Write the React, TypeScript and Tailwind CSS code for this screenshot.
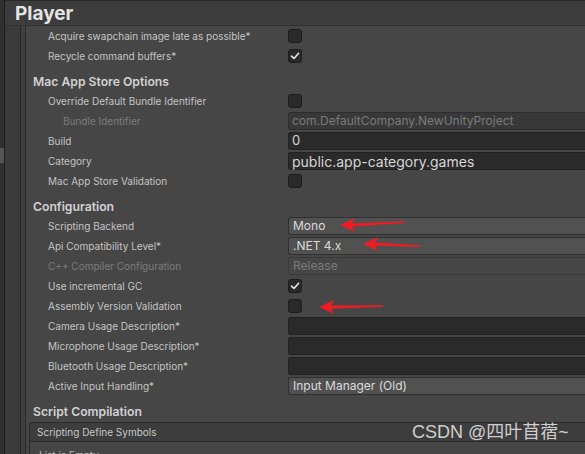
import React from 'react';

type Row =
  | { kind: 'header'; label: string }
  | { kind: 'check'; label: string; checked?: boolean; dim?: boolean; indent?: boolean }
  | { kind: 'text'; label: string; value?: string; dim?: boolean; indent?: boolean; size?: string }
  | { kind: 'select'; label: string; value: string; dim?: boolean };

const rows: Row[] = [
  { kind: 'check', label: 'Acquire swapchain image late as possible*' },
  { kind: 'check', label: 'Recycle command buffers*', checked: true },
  { kind: 'header', label: 'Mac App Store Options' },
  { kind: 'check', label: 'Override Default Bundle Identifier' },
  { kind: 'text', label: 'Bundle Identifier', value: 'com.DefaultCompany.NewUnityProject', dim: true, indent: true, size: 'text-[12px]' },
  { kind: 'text', label: 'Build', value: '0', size: 'text-[13px]' },
  { kind: 'text', label: 'Category', value: 'public.app-category.games', size: 'text-[14px]' },
  { kind: 'check', label: 'Mac App Store Validation' },
  { kind: 'header', label: 'Configuration' },
  { kind: 'select', label: 'Scripting Backend', value: 'Mono' },
  { kind: 'select', label: 'Api Compatibility Level*', value: '.NET 4.x' },
  { kind: 'select', label: 'C++ Compiler Configuration', value: 'Release', dim: true },
  { kind: 'check', label: 'Use incremental GC', checked: true },
  { kind: 'check', label: 'Assembly Version Validation' },
  { kind: 'text', label: 'Camera Usage Description*' },
  { kind: 'text', label: 'Microphone Usage Description*' },
  { kind: 'text', label: 'Bluetooth Usage Description*' },
  { kind: 'select', label: 'Active Input Handling*', value: 'Input Manager (Old)' },
  { kind: 'header', label: 'Script Compilation' },
];

const Checkbox = ({ checked }: { checked?: boolean }) => (
  <div className="w-[14px] h-[14px] rounded-[3px] bg-[#2a2a2a] border border-[#1c1c1c] flex items-center justify-center">
    {checked && (
      <svg width="10" height="10" viewBox="0 0 10 10">
        <path d="M1.5 5.2 L4 7.5 L8.6 2.3" fill="none" stroke="#e8e8e8" strokeWidth="1.6" strokeLinecap="round" strokeLinejoin="round" />
      </svg>
    )}
  </div>
);

const Arrow = ({ x1, y1, x2, y2 }: { x1: number; y1: number; x2: number; y2: number }) => {
  // tip at (x1,y1), tail at (x2,y2)
  const left = Math.min(x1, x2) - 2;
  const top = Math.min(y1, y2) - 10;
  const w = Math.abs(x2 - x1) + 4;
  const h = Math.abs(y2 - y1) + 20;
  const tx = x1 - left;
  const ty = y1 - top;
  const ex = x2 - left;
  const ey = y2 - top;
  return (
    <svg className="absolute pointer-events-none" style={{ left, top }} width={w} height={h}>
      <path
        d={`M${tx} ${ty} L${tx + 15} ${ty - 7} L${tx + 12} ${ty - 1.5} L${ex} ${ey - 0.8} L${ex} ${ey + 0.8} L${tx + 12} ${ty + 1.8} L${tx + 15} ${ty + 7} Z`}
        fill="#ee1c24"
      />
    </svg>
  );
};

export default function App() {
  return (
    <div className="relative w-[585px] h-[454px] overflow-hidden bg-[#464646] flex font-['Inter',sans-serif] text-[10px] text-[#c4c4c4]">
      <div className="w-[5px] shrink-0 bg-[#2f2f2f] border-r border-[#1e1e1e] flex flex-col">
        <div className="h-[148px]" />
        <div className="h-[15px] bg-[#555555]" />
      </div>
      <div className="flex-1 flex flex-col min-w-0">
        <div className="h-[26px] shrink-0 bg-[#3c3c3c] border-t border-[#2a2a2a] border-b border-b-[#303030] pl-[10px] flex items-center">
          <span className="text-[19px] font-bold text-[#e4e4e4] leading-none">Player</span>
        </div>
        <div className="flex flex-1 min-h-0">
          <div className="w-[16px] shrink-0 bg-[#3b3b3b] border-r border-[#262626]" />
          <div className="w-[5px] shrink-0 bg-[#3f3f3f] border-r border-[#2b2b2b]" />
          <div className="flex-1 min-w-0 flex flex-col">
            {rows.map((r, i) => {
              if (r.kind === 'header') {
                return (
                  <div key={i} className="h-[25px] shrink-0 flex items-end pl-[7px] text-[12.2px] font-semibold text-[#d2d2d2]">
                    {r.label}
                  </div>
                );
              }
              const labelCls = (r.dim ? 'text-[#7c7c7c] ' : '') + ('indent' in r && r.indent ? 'pl-[37px]' : 'pl-[22px]');
              return (
                <div key={i} className="h-[20px] shrink-0 flex items-center">
                  <div className={'w-[262px] shrink-0 whitespace-nowrap ' + labelCls}>{r.label}</div>
                  <div className="flex-1 min-w-0">
                    {r.kind === 'check' && <Checkbox checked={r.checked} />}
                    {r.kind === 'text' && (
                      <div
                        className={
                          'h-[18px] rounded-l-[3px] border border-r-0 pl-[3px] flex items-center whitespace-nowrap ' +
                          (r.size ?? 'text-[12px]') +
                          ' ' +
                          (r.dim ? 'text-[#7a7a7a] bg-[#383838] border-[#2e2e2e]' : 'text-[#d6d6d6] bg-[#2a2a2a] border-[#212121]')
                        }
                      >
                        {r.value}
                      </div>
                    )}
                    {r.kind === 'select' && (
                      <div
                        className={
                          'h-[18px] rounded-l-[3px] border border-r-0 pl-[4px] flex items-center whitespace-nowrap text-[12px] ' +
                          (r.dim ? 'bg-[#464646] border-[#3a3a3a] text-[#7a7a7a]' : 'bg-[#515151] border-[#303030] text-[#dadada]')
                        }
                      >
                        {r.value}
                      </div>
                    )}
                  </div>
                </div>
              );
            })}
            <div className="ml-[3px] mt-[1px] h-[20px] shrink-0 bg-[#3d3d3d] border-t border-b border-l border-[#2a2a2a] rounded-tl-[3px] pl-[7px] flex items-center text-[#c8c8c8]">
              Scripting Define Symbols
            </div>
            <div className="ml-[3px] flex-1 border-l border-[#2a2a2a] pl-[9px] pt-[6px] text-[#bdbdbd]">List is Empty</div>
          </div>
        </div>
      </div>

      <Arrow x1={340} y1={225} x2={405} y2={222} />
      <Arrow x1={363} y1={244} x2={420} y2={246} />
      <Arrow x1={319} y1={307} x2={383} y2={306} />

      <div className="absolute left-[412px] top-[420px] text-[18px] leading-[24px] text-[#cfcfcf] font-['Liberation_Sans','Noto_Sans_CJK_SC',sans-serif] whitespace-nowrap">
        CSDN @四叶苜蓿~
      </div>
    </div>
  );
}
